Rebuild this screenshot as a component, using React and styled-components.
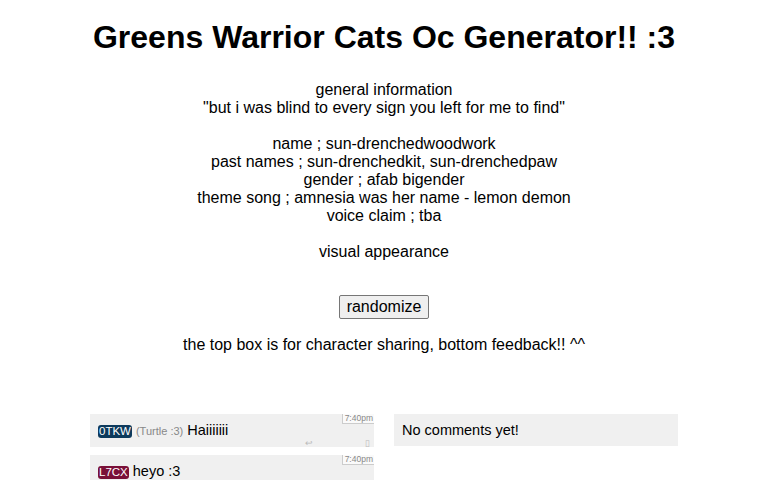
import React from "react"
import styled, { createGlobalStyle } from "styled-components"

const GlobalStyle = createGlobalStyle`
  body {
    margin: 8px;
    background: #ffffff;
    color: #000000;
    font-family: "Liberation Sans", Arial, sans-serif;
  }
`

const Page = styled.div`
  text-align: center;
`

const Title = styled.h1`
  font-size: 32px;
  font-weight: bold;
  margin: 11px 0 25px;
`

const Paragraph = styled.p`
  font-size: 16px;
  line-height: 18px;
  margin: 0 0 18px;
`

const RandomButton = styled.button`
  font-family: "Liberation Sans", Arial, sans-serif;
  font-size: 16px;
  padding: 2px 7px;
  margin-top: 16px;
  background: #efefef;
  border: 1px solid #767676;
  border-radius: 2px;
  color: #000;
`

const Note = styled.p`
  font-size: 16px;
  line-height: 18px;
  margin: 17px 0 0;
`

const Boards = styled.div`
  display: grid;
  grid-template-columns: 284px 284px;
  column-gap: 20px;
  justify-content: center;
  margin-top: 60px;
  text-align: left;
`

const Column = styled.div`
  display: flex;
  flex-direction: column;
  gap: 8px;
`

const Comment = styled.div`
  position: relative;
  background: #f0f0f0;
  padding: 8px 8px 8px;
  font-size: 14px;
  line-height: 16px;
`

const Stamp = styled.span`
  position: absolute;
  top: 0;
  right: 0;
  font-size: 8.5px;
  line-height: 9px;
  color: #888;
  background: #fafafa;
  border-left: 1px solid #ccc;
  border-bottom: 1px solid #ccc;
  padding: 0 1px 0 2px;
`

const Badge = styled.span`
  display: inline-block;
  background: ${(p) => p.$bg};
  color: #fff;
  font-size: 11.5px;
  line-height: 13px;
  padding: 0 1px;
  border-radius: 3px;
  margin-right: 4px;
`

const Alias = styled.span`
  color: #888;
  font-size: 11px;
  margin-right: 4px;
`

const Message = styled.span`
  font-size: 14.5px;
`

const Actions = styled.div`
  position: absolute;
  right: 4px;
  bottom: -4px;
  display: flex;
  gap: 52px;
  font-size: 9px;
  color: #bbb;
`

const Empty = styled.div`
  background: #f0f0f0;
  padding: 8px;
  font-size: 14.5px;
  line-height: 16px;
`

export default function App() {
  return (
    <Page>
      <GlobalStyle />
      <Title>Greens Warrior Cats Oc Generator!! :3</Title>
      <Paragraph>
        general information
        <br />
        "but i was blind to every sign you left for me to find"
      </Paragraph>
      <Paragraph>
        name ; sun-drenchedwoodwork
        <br />
        past names ; sun-drenchedkit, sun-drenchedpaw
        <br />
        gender ; afab bigender
        <br />
        theme song ; amnesia was her name - lemon demon
        <br />
        voice claim ; tba
      </Paragraph>
      <Paragraph>visual appearance</Paragraph>
      <RandomButton>randomize</RandomButton>
      <Note>the top box is for character sharing, bottom feedback!! ^^</Note>
      <Boards>
        <Column>
          <Comment>
            <Stamp>7:40pm</Stamp>
            <Badge $bg="#0d3a5c">0TKW</Badge>
            <Alias>(Turtle :3)</Alias>
            <Message>Haiiiiiii</Message>
            <Actions>
              <span>↩</span>
              <span>▯</span>
            </Actions>
          </Comment>
          <Comment>
            <Stamp>7:40pm</Stamp>
            <Badge $bg="#7a1038">L7CX</Badge>
            <Message>heyo :3</Message>
          </Comment>
        </Column>
        <Column>
          <Empty>No comments yet!</Empty>
        </Column>
      </Boards>
    </Page>
  )
}
